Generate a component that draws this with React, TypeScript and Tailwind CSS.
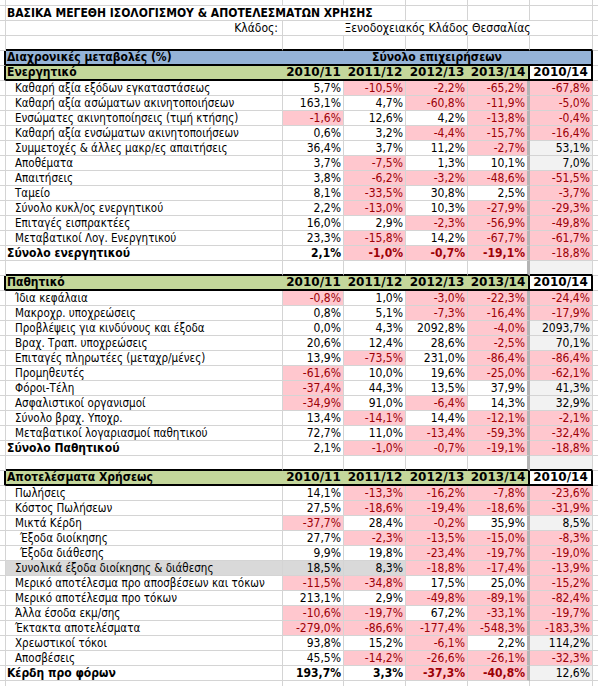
import React from 'react';

const cx = (...a: (string | false | undefined | null)[]) => a.filter(Boolean).join(' ');

type DataR = {
  kind: 'data';
  label: string;
  vals: string[];
  indent?: number;
  bold?: boolean;
  boldVals?: boolean;
  gray?: boolean;
};
type Rw =
  | DataR
  | { kind: 'title' }
  | { kind: 'klados' }
  | { kind: 'empty'; black?: boolean; gG?: boolean }
  | { kind: 'blue' }
  | { kind: 'green'; label: string };

const VW = ['w-[61px]', 'w-[62px]', 'w-[62px]', 'w-[62px]', 'w-[63px]'];

const rows: Rw[] = [
  { kind: 'title' },
  { kind: 'klados' },
  { kind: 'empty', black: true },
  { kind: 'blue' },
  { kind: 'green', label: 'Ενεργητικό' },
  { kind: 'data', label: 'Καθαρή αξία εξόδων εγκαταστάσεως', vals: ['5,7%', '-10,5%', '-2,2%', '-65,2%', '-67,8%'] },
  { kind: 'data', label: 'Καθαρή αξία ασώματων ακινητοποιήσεων', vals: ['163,1%', '4,7%', '-60,8%', '-11,9%', '-5,0%'] },
  { kind: 'data', label: 'Ενσώματες ακινητοποίησεις (τιμή κτήσης)', vals: ['-1,6%', '12,6%', '4,2%', '-13,8%', '-0,4%'] },
  { kind: 'data', label: 'Καθαρή αξία ενσώματων ακινητοποιήσεων', vals: ['0,6%', '3,2%', '-4,4%', '-15,7%', '-16,4%'] },
  { kind: 'data', label: 'Συμμετοχές & άλλες μακρ/ες απαιτήσεις', vals: ['36,4%', '3,7%', '11,2%', '-2,7%', '53,1%'] },
  { kind: 'data', label: 'Αποθέματα', vals: ['3,7%', '-7,5%', '1,3%', '10,1%', '7,0%'] },
  { kind: 'data', label: 'Απαιτήσεις', vals: ['3,8%', '-6,2%', '-3,2%', '-48,6%', '-51,5%'] },
  { kind: 'data', label: 'Ταμείο', vals: ['8,1%', '-33,5%', '30,8%', '2,5%', '-3,7%'] },
  { kind: 'data', label: 'Σύνολο κυκλ/ος ενεργητικού', vals: ['2,2%', '-13,0%', '10,3%', '-27,9%', '-29,3%'] },
  { kind: 'data', label: 'Επιταγές εισπρακτέες', vals: ['16,0%', '2,9%', '-2,3%', '-56,9%', '-49,8%'] },
  { kind: 'data', label: 'Μεταβατικοί Λογ. Ενεργητικού', vals: ['23,3%', '-15,8%', '14,2%', '-67,7%', '-61,7%'] },
  { kind: 'data', label: 'Σύνολο ενεργητικού', bold: true, boldVals: true, vals: ['2,1%', '-1,0%', '-0,7%', '-19,1%', '-18,8%'] },
  { kind: 'empty', black: true, gG: true },
  { kind: 'green', label: 'Παθητικό' },
  { kind: 'data', label: 'Ίδια κεφάλαια', vals: ['-0,8%', '1,0%', '-3,0%', '-22,3%', '-24,4%'] },
  { kind: 'data', label: 'Μακροχρ. υποχρεώσεις', vals: ['0,8%', '5,1%', '-7,3%', '-16,4%', '-17,9%'] },
  { kind: 'data', label: 'Προβλέψεις για κινδύνους και έξοδα', vals: ['0,0%', '4,3%', '2092,8%', '-4,0%', '2093,7%'] },
  { kind: 'data', label: 'Βραχ. Τραπ. υποχρεώσεις', vals: ['20,6%', '12,4%', '28,6%', '-2,5%', '70,1%'] },
  { kind: 'data', label: 'Επιταγές πληρωτέες (μεταχρ/μένες)', vals: ['13,9%', '-73,5%', '231,0%', '-86,4%', '-86,4%'] },
  { kind: 'data', label: 'Προμηθευτές', vals: ['-61,6%', '10,0%', '19,6%', '-25,0%', '-62,1%'] },
  { kind: 'data', label: 'Φόροι-Τέλη', vals: ['-37,4%', '44,3%', '13,5%', '37,9%', '41,3%'] },
  { kind: 'data', label: 'Ασφαλιστικοί οργανισμοί', vals: ['-34,9%', '91,0%', '-6,4%', '14,3%', '32,9%'] },
  { kind: 'data', label: 'Σύνολο βραχ. Υποχρ.', vals: ['13,4%', '-14,1%', '14,4%', '-12,1%', '-2,1%'] },
  { kind: 'data', label: 'Μεταβατικοί λογαριασμοί παθητικού', vals: ['72,7%', '11,0%', '-13,4%', '-59,3%', '-32,4%'] },
  { kind: 'data', label: 'Σύνολο Παθητικού', bold: true, vals: ['2,1%', '-1,0%', '-0,7%', '-19,1%', '-18,8%'] },
  { kind: 'empty', black: true, gG: true },
  { kind: 'green', label: 'Αποτελέσματα Χρήσεως' },
  { kind: 'data', label: 'Πωλήσεις', vals: ['14,1%', '-13,3%', '-16,2%', '-7,8%', '-23,6%'] },
  { kind: 'data', label: 'Κόστος Πωλήσεων', vals: ['27,5%', '-18,6%', '-19,4%', '-18,6%', '-31,9%'] },
  { kind: 'data', label: 'Μικτά Κέρδη', vals: ['-37,7%', '28,4%', '-0,2%', '35,9%', '8,5%'] },
  { kind: 'data', label: 'Έξοδα διοίκησης', indent: 2, vals: ['27,7%', '-2,3%', '-13,5%', '-15,0%', '-8,3%'] },
  { kind: 'data', label: 'Έξοδα διάθεσης', indent: 2, vals: ['9,9%', '19,8%', '-23,4%', '-19,7%', '-19,0%'] },
  { kind: 'data', label: 'Συνολικά έξοδα διοίκησης & διάθεσης', gray: true, vals: ['18,5%', '8,3%', '-18,8%', '-17,4%', '-13,9%'] },
  { kind: 'data', label: 'Μερικό αποτέλεσμα προ αποσβέσεων και τόκων', vals: ['-11,5%', '-34,8%', '17,5%', '25,0%', '-15,2%'] },
  { kind: 'data', label: 'Μερικό αποτέλεσμα προ τόκων', vals: ['213,1%', '2,9%', '-49,8%', '-89,1%', '-82,4%'] },
  { kind: 'data', label: 'Άλλα έσοδα εκμ/σης', vals: ['-10,6%', '-19,7%', '67,2%', '-33,1%', '-19,7%'] },
  { kind: 'data', label: 'Έκτακτα αποτελέσματα', vals: ['-279,0%', '-86,6%', '-177,4%', '-548,3%', '-183,3%'] },
  { kind: 'data', label: 'Χρεωστικοί τόκοι', vals: ['93,8%', '15,2%', '-6,1%', '2,2%', '114,2%'] },
  { kind: 'data', label: 'Αποσβέσεις', vals: ['45,5%', '-14,2%', '-26,6%', '-26,1%', '-32,3%'] },
  { kind: 'data', label: 'Κέρδη προ φόρων', bold: true, boldVals: true, vals: ['193,7%', '3,3%', '-37,3%', '-40,8%', '12,6%'] },
];

const G = 'border-[#d4d4d4]';

function ACell({ black }: { black?: boolean }) {
  return (
    <div
      className={cx(
        'w-[6px] h-full shrink-0 border-b',
        G,
        black ? 'border-r-2 border-r-black' : 'border-r'
      )}
    />
  );
}
function HCell() {
  return <div className={cx('flex-1 h-full border-b', G)} />;
}

function DataRow({ r }: { r: DataR }) {
  return (
    <div className="flex h-[15px]">
      <ACell />
      <div
        className={cx(
          'w-[277px] h-full shrink-0 border-r border-b whitespace-nowrap overflow-hidden leading-[14px]',
          G,
          r.gray ? 'bg-[#d9d9d9]' : 'bg-white',
          r.bold ? 'font-bold pl-[1px]' : r.indent === 2 ? 'pl-[14px] text-[11.5px]' : 'pl-[9px] text-[11.5px]'
        )}
      >
        {r.label}
      </div>
      {r.vals.map((v, i) => {
        const neg = v.startsWith('-');
        const last = i === 4;
        return (
          <div
            key={i}
            className={cx(
              VW[i],
              'h-full shrink-0 border-b text-right pr-[2px] leading-[14px] whitespace-nowrap',
              G,
              i === 3 ? 'border-r-[3px] border-r-[#b4b4b4]' : 'border-r',
              neg ? 'bg-[#ffc7ce] text-[#9c0006]' : last ? 'bg-[#f2f2f2] text-black' : r.gray ? 'bg-[#d9d9d9] text-black' : 'bg-white text-black',
              r.boldVals && !last ? 'font-bold' : 'font-normal'
            )}
          >
            {v}
          </div>
        );
      })}
      <HCell />
    </div>
  );
}

function EmptyRow({ black, gG }: { black?: boolean; gG?: boolean }) {
  const b = black ? 'border-b-2 border-b-black' : 'border-b';
  return (
    <div className="flex h-[15px]">
      <ACell />
      <div className={cx('w-[277px] h-full shrink-0 border-r', G, b)} />
      {VW.map((w, i) => (
        <div
          key={i}
          className={cx(
            w,
            'h-full shrink-0',
            G,
            b,
            gG && i === 3 ? 'border-r-[3px] border-r-[#b4b4b4]' : 'border-r',
            gG && i === 4 ? 'bg-[#f2f2f2]' : 'bg-white'
          )}
        />
      ))}
      <HCell />
    </div>
  );
}

function GreenRow({ label }: { label: string }) {
  const heads = ['2010/11', '2011/12', '2012/13', '2013/14'];
  return (
    <div className="flex h-[15px]">
      <ACell black />
      <div className="w-[277px] h-full shrink-0 bg-[#c4d79b] border-b-2 border-b-black font-bold pl-[1px] leading-[13px] whitespace-nowrap">
        {label}
      </div>
      {heads.map((h, i) => (
        <div
          key={i}
          className={cx(
            VW[i],
            'h-full shrink-0 bg-[#c4d79b] border-b-2 border-b-black text-center leading-[13px] font-bold text-[12px] font-["DejaVu_Sans",sans-serif] [font-stretch:normal] whitespace-nowrap',
            i === 3 ? 'border-r-2 border-r-black' : ''
          )}
        >
          {h}
        </div>
      ))}
      <div className="w-[63px] h-full shrink-0 bg-white border-b-2 border-b-black border-r-2 border-r-black text-center leading-[13px] font-bold text-[12px] font-['DejaVu_Sans',sans-serif] [font-stretch:normal] whitespace-nowrap">
        2010/14
      </div>
      <HCell />
    </div>
  );
}

function BlueRow() {
  return (
    <div className="flex h-[15px]">
      <ACell black />
      <div className="w-[277px] h-full shrink-0 bg-[#95b3d7] border-b-2 border-b-black font-bold pl-[1px] leading-[13px] whitespace-nowrap">
        Διαχρονικές μεταβολές (%)
      </div>
      <div className="w-[310px] h-full shrink-0 bg-[#95b3d7] border-b-2 border-b-black border-r-2 border-r-black font-bold text-center leading-[13px] whitespace-nowrap">
        Σύνολο επιχειρήσεων
      </div>
      <HCell />
    </div>
  );
}

function TitleRow() {
  return (
    <div className="flex h-[15px]">
      <ACell />
      <div className={cx('w-[277px] h-full shrink-0 border-b relative', G)}>
        <span className="absolute left-[1px] top-0 leading-[14px] font-bold whitespace-nowrap">
          ΒΑΣΙΚΑ ΜΕΓΕΘΗ ΙΣΟΛΟΓΙΣΜΟΥ &amp; ΑΠΟΤΕΛΕΣΜΑΤΩΝ ΧΡΗΣΗΣ
        </span>
      </div>
      <div className={cx('w-[61px] h-full shrink-0 border-b', G)} />
      <div className={cx('w-[62px] h-full shrink-0 border-b border-r', G)} />
      <div className={cx('w-[62px] h-full shrink-0 border-b border-r', G)} />
      <div className={cx('w-[62px] h-full shrink-0 border-b border-r', G)} />
      <div className={cx('w-[63px] h-full shrink-0 border-b border-r', G)} />
      <HCell />
    </div>
  );
}

function KladosRow() {
  return (
    <div className="flex h-[15px]">
      <ACell />
      <div className={cx('w-[277px] h-full shrink-0 border-b border-r text-right pr-[4px] leading-[14px] whitespace-nowrap', G)}>
        Κλάδος:
      </div>
      <div className={cx('w-[310px] h-full shrink-0 border-b border-r text-center leading-[14px] whitespace-nowrap', G)}>
        Ξενοδοχειακός Κλάδος Θεσσαλίας
      </div>
      <HCell />
    </div>
  );
}

export default function App() {
  return (
    <div className="w-[598px] h-[686px] overflow-hidden bg-white text-black text-[12px] font-['DejaVu_Sans_Condensed','DejaVu_Sans',sans-serif] font-stretch-condensed">
      <div className="flex h-[6px]">
        <ACell />
        <div className={cx('w-[277px] h-full shrink-0 border-r border-b', G)} />
        {VW.map((w, i) => (
          <div key={i} className={cx(w, 'h-full shrink-0 border-r border-b', G)} />
        ))}
        <HCell />
      </div>
      {rows.map((r, i) => {
        if (r.kind === 'data') return <DataRow key={i} r={r} />;
        if (r.kind === 'title') return <TitleRow key={i} />;
        if (r.kind === 'klados') return <KladosRow key={i} />;
        if (r.kind === 'empty') return <EmptyRow key={i} black={r.black} gG={r.gG} />;
        if (r.kind === 'blue') return <BlueRow key={i} />;
        return <GreenRow key={i} label={r.label} />;
      })}
      <div className="flex h-[15px]">
        <ACell />
        <div className={cx('w-[277px] h-full shrink-0 border-r border-b', G)} />
        {VW.map((w, i) => (
          <div key={i} className={cx(w, 'h-full shrink-0 border-r border-b', G)} />
        ))}
        <HCell />
      </div>
    </div>
  );
}
